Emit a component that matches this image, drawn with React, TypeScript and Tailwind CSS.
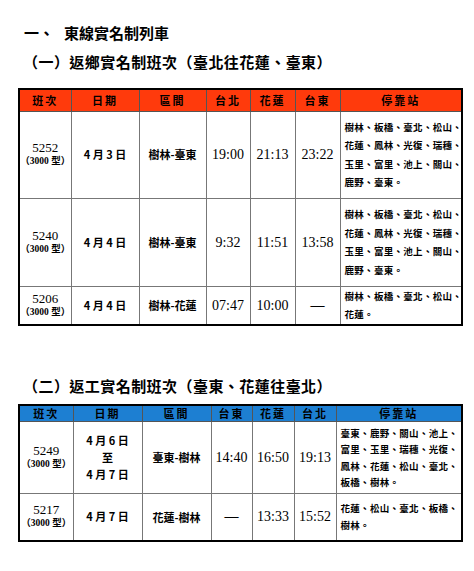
const cjk = "font-['Noto_Sans_CJK_TC','Noto_Sans_CJK_SC',sans-serif]";
const serif = "font-['Liberation_Serif','Noto_Sans_CJK_TC',serif]";

type Row = {
  no: string;
  date: string[];
  route: string;
  t1: string;
  t2: string;
  t3: string;
  stops: string[];
  h: string;
};

const goHome: Row[] = [
  { no: "5252", date: ["4 月 3 日"], route: "樹林-臺東", t1: "19:00", t2: "21:13", t3: "23:22", stops: ["樹林、板橋、臺北、松山、", "花蓮、鳳林、光復、瑞穗、", "玉里、富里、池上、關山、", "鹿野、臺東。"], h: "h-[87px]" },
  { no: "5240", date: ["4 月 4 日"], route: "樹林-臺東", t1: "9:32", t2: "11:51", t3: "13:58", stops: ["樹林、板橋、臺北、松山、", "花蓮、鳳林、光復、瑞穗、", "玉里、富里、池上、關山、", "鹿野、臺東。"], h: "h-[88px]" },
  { no: "5206", date: ["4 月 4 日"], route: "樹林-花蓮", t1: "07:47", t2: "10:00", t3: "--", stops: ["樹林、板橋、臺北、松山、", "花蓮。"], h: "h-[37px]" },
];

const backWork: Row[] = [
  { no: "5249", date: ["4 月 6 日", "至", "4 月 7 日"], route: "臺東-樹林", t1: "14:40", t2: "16:50", t3: "19:13", stops: ["臺東、鹿野、關山、池上、", "富里、玉里、瑞穗、光復、", "鳳林、花蓮、松山、臺北、", "板橋、樹林。"], h: "h-[72px]" },
  { no: "5217", date: ["4 月 7 日"], route: "花蓮-樹林", t1: "--", t2: "13:33", t3: "15:52", stops: ["花蓮、松山、臺北、板橋、", "樹林。"], h: "h-[47px]" },
];

function Schedule({ rows, headers, headColor, widths, headH, lineH }: { rows: Row[]; headers: string[]; headColor: string; widths: string[]; headH: string; lineH: string }) {
  return (
    <table className="w-[443px] table-fixed border-collapse border-2 border-black">
      <colgroup>
        {widths.map((w, i) => (
          <col key={i} className={w} />
        ))}
      </colgroup>
      <thead>
        <tr className={`${headColor} ${headH}`}>
          {headers.map((h) => (
            <th key={h} className={`border border-[#555] p-0 text-[11px] font-bold leading-none tracking-[2px] text-black ${cjk}`}>
              {h}
            </th>
          ))}
        </tr>
      </thead>
      <tbody>
        {rows.map((r) => (
          <tr key={r.no} className={r.h}>
            <td className="border border-[#777] p-0 text-center">
              <div className={`${serif} text-[13px] leading-[14px]`}>{r.no}</div>
              <div className={`${serif} text-[9.5px] leading-[13px] font-bold`}>（3000 型）</div>
            </td>
            <td className={`border border-[#777] p-0 text-center text-[11px] font-bold leading-[17px] ${cjk}`}>
              {r.date.map((d) => (
                <div key={d}>{d}</div>
              ))}
            </td>
            <td className={`border border-[#777] p-0 text-center text-[11px] font-bold ${cjk}`}>{r.route}</td>
            {[r.t1, r.t2, r.t3].map((t, i) => (
              <td key={i} className={`border border-[#777] p-0 text-center text-[14px] ${serif}`}>
                {t === "--" ? <span className="font-bold">—</span> : t}
              </td>
            ))}
            <td className={`border border-[#777] py-0 pl-[4px] pr-0 text-left text-[9.5px] font-bold tracking-[0.3px] ${lineH} ${cjk}`}>
              {r.stops.map((s) => (
                <div key={s} className="whitespace-nowrap">{s}</div>
              ))}
            </td>
          </tr>
        ))}
      </tbody>
    </table>
  );
}

export default function App() {
  return (
    <div className="h-[571px] w-[474px] bg-white px-[18px] pt-[23px] text-black">
      <h1 className={`flex h-[18px] items-center pl-[6px] text-[15px] font-bold leading-none ${cjk}`}>
        <span className="w-[40px]">一、</span>
        <span>東線實名制列車</span>
      </h1>
      <h2 className={`mt-[12px] h-[18px] pl-[5px] text-[15px] font-bold leading-[18px] tracking-[0.45px] ${cjk}`}>
        （一）返鄉實名制班次（臺北往花蓮、臺東）
      </h2>
      <div className="mt-[17px]">
        <Schedule
          rows={goHome}
          headers={["班次", "日期", "區間", "台北", "花蓮", "台東", "停靠站"]}
          headColor="bg-[#ff3a0c]"
          widths={["w-[52px]", "w-[68px]", "w-[67px]", "w-[44px]", "w-[45px]", "w-[45px]", "w-[122px]"]}
          headH="h-[22px]"
          lineH="leading-[18.5px]"
        />
      </div>
      <h2 className={`mt-[51px] h-[18px] pl-[5px] text-[15px] font-bold leading-[18px] tracking-[0.45px] ${cjk}`}>
        （二）返工實名制班次（臺東、花蓮往臺北）
      </h2>
      <div className="mt-[9px]">
        <Schedule
          rows={backWork}
          headers={["班次", "日期", "區間", "台東", "花蓮", "台北", "停靠站"]}
          headColor="bg-[#1d7fd2]"
          widths={["w-[54px]", "w-[69px]", "w-[69px]", "w-[41px]", "w-[42px]", "w-[42px]", "w-[126px]"]}
          headH="h-[17px]"
          lineH="leading-[16.5px]"
        />
      </div>
    </div>
  );
}
